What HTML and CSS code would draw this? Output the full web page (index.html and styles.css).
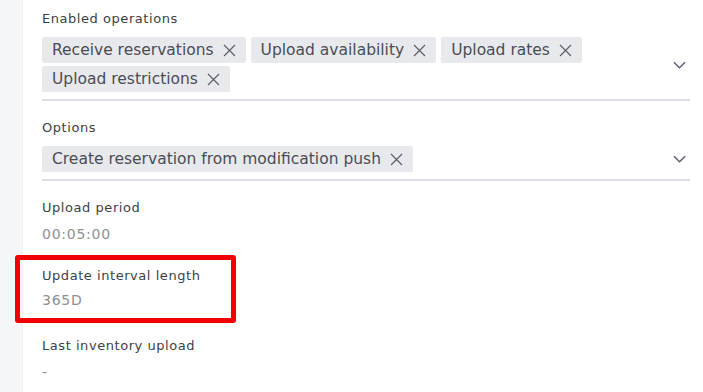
FILE: index.html
```html
<!DOCTYPE html>
<html lang="en">
<head>
	<title>Channel settings</title>
	<link rel="stylesheet" href="styles.css">
</head>
<body>
	<div class="side"></div>

	<main class="content">
		<div class="field">
			<div class="label">Enabled operations</div>
			<div class="select">
				<div class="tags">
					<span class="tag"><span>Receive reservations</span><svg class="x" viewBox="0 0 13 13"><path d="M1 1L12 12M12 1L1 12"/></svg></span>
					<span class="tag"><span>Upload availability</span><svg class="x" viewBox="0 0 13 13"><path d="M1 1L12 12M12 1L1 12"/></svg></span>
					<span class="tag"><span>Upload rates</span><svg class="x" viewBox="0 0 13 13"><path d="M1 1L12 12M12 1L1 12"/></svg></span>
					<span class="tag"><span>Upload restrictions</span><svg class="x" viewBox="0 0 13 13"><path d="M1 1L12 12M12 1L1 12"/></svg></span>
				</div>
				<svg class="chev" viewBox="0 0 14 8"><path d="M1 1L7 7L13 1"/></svg>
			</div>
		</div>

		<div class="field">
			<div class="label">Options</div>
			<div class="select">
				<div class="tags">
					<span class="tag"><span>Create reservation from modification push</span><svg class="x" viewBox="0 0 13 13"><path d="M1 1L12 12M12 1L1 12"/></svg></span>
				</div>
				<svg class="chev" viewBox="0 0 14 8"><path d="M1 1L7 7L13 1"/></svg>
			</div>
		</div>

		<div class="info">
			<div class="label">Upload period</div>
			<div class="value">00:05:00</div>
		</div>

		<div class="info marked">
			<div class="label">Update interval length</div>
			<div class="value">365D</div>
		</div>

		<div class="info">
			<div class="label">Last inventory upload</div>
			<div class="value">-</div>
		</div>
	</main>
</body>
</html>
```

FILE: styles.css
```css
html, body {
	height: 392px;
	overflow: hidden;
}
body {
	margin: 0;
	display: flex;
	background-color: #fff;
	font-family: "DejaVu Sans", sans-serif;
	color: #333;
}
.side {
	width: 22px;
	flex-shrink: 0;
	background-color: #f5f6f9;
	border-right: 1px solid #eef0f3;
}
.content {
	width: 648px;
	padding: 10px 0 0 19px;
}
.label {
	font-size: 13px;
	line-height: 18px;
	letter-spacing: 0.55px;
	color: #3c3f45;
}
.field {
	margin-bottom: 18px;
}
.select {
	display: flex;
	align-items: center;
	border-bottom: 2px solid #dcdde2;
	padding: 9px 0 7px;
}
.tags {
	flex: 1;
	display: flex;
	flex-wrap: wrap;
	gap: 3px 5px;
}
.tag {
	display: inline-flex;
	align-items: center;
	height: 26px;
	padding: 0 10px;
	background-color: #e8e9ed;
	border-radius: 2px;
	font-size: 15.5px;
	color: #4a4d55;
}
.x {
	width: 13px;
	height: 13px;
	margin-left: 9px;
	fill: none;
	stroke: #5b5f68;
	stroke-width: 1.2;
}
.chev {
	width: 13px;
	height: 8px;
	margin: 0 4px 0 10px;
	fill: none;
	stroke: #5a6272;
	stroke-width: 1.6;
}
.info {
	margin-bottom: 12px;
}
.value {
	margin-top: 8px;
	font-size: 14px;
	line-height: 18px;
	letter-spacing: 0.75px;
	color: #8e9096;
}
.marked {
	box-sizing: border-box;
	width: 221px;
	margin-left: -27px;
	margin-bottom: 14px;
	padding: 7px 0 9px 22px;
	border: 5px solid #f00000;
	border-radius: 3px;
}
.marked .value {
	margin-top: 6px;
}
```
